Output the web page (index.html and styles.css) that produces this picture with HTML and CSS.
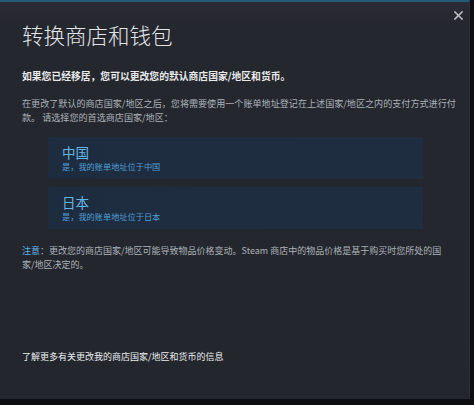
FILE: index.html
```html
<!DOCTYPE html>
<html lang="zh-CN">
<head>
<meta charset="utf-8">
<title>转换商店和钱包</title>
<link rel="stylesheet" href="styles.css">
</head>
<body>
<div class="modal">
  <button class="close" aria-label="关闭">
    <svg width="9" height="9" viewBox="0 0 9 9"><path d="M1 1L8 8M8 1L1 8" stroke="#b9bdc1" stroke-width="1.6" stroke-linecap="square"/></svg>
  </button>
  <h1 class="title">转换商店和钱包</h1>
  <p class="lead">如果您已经移居，您可以更改您的默认商店国家/地区和货币。</p>
  <p class="desc">在更改了默认的商店国家/地区之后，您将需要使用一个账单地址登记在上述国家/地区之内的支付方式进行付款。 请选择您的首选商店国家/地区：</p>
  <div class="options">
    <div class="option">
      <div class="option-name">中国</div>
      <div class="option-sub">是，我的账单地址位于中国</div>
    </div>
    <div class="option">
      <div class="option-name">日本</div>
      <div class="option-sub">是，我的账单地址位于日本</div>
    </div>
  </div>
  <p class="note"><span class="note-label">注意</span>：更改您的商店国家/地区可能导致物品价格变动。Steam 商店中的物品价格是基于购买时您所处的国家/地区决定的。</p>
  <a class="more" href="#">了解更多有关更改我的商店国家/地区和货币的信息</a>
</div>
</body>
</html>
```
FILE: styles.css
```css
html, body {
  margin: 0;
  padding: 0;
}

body {
  width: 474px;
  height: 405px;
  overflow: hidden;
  background: #0c0e11;
  font-family: "Noto Sans CJK SC", "Noto Sans", sans-serif;
}

.modal {
  position: relative;
  box-sizing: border-box;
  width: 470px;
  height: 399px;
  display: flex;
  flex-direction: column;
  padding: 19px 10px 35px 22px;
  border-top: 2px solid #245a78;
  border-right: 1px solid #2c3038;
  background: linear-gradient(180deg, #2a2b35 0px, #25272f 24px, #23262d 100%);
}

.close {
  position: absolute;
  top: 9px;
  right: 6px;
  width: 9px;
  height: 9px;
  padding: 0;
  border: 0;
  background: none;
  display: flex;
}

.title {
  margin: 0;
  font-size: 21.5px;
  line-height: 28px;
  font-weight: 300;
  color: #e3e6e9;
}

.lead {
  margin: 20px 0 0;
  font-size: 9.8px;
  line-height: 14px;
  font-weight: 700;
  color: #e8e9ea;
}

.desc {
  margin: 13px 0 0;
  font-size: 9.08px;
  line-height: 14px;
  color: #acb2b8;
  text-spacing-trim: space-all;
}

.options {
  margin: 13px 36px 0 26px;
  display: flex;
  flex-direction: column;
  gap: 8px;
}

.option {
  height: 42px;
  box-sizing: border-box;
  padding: 7px 14px;
  background: linear-gradient(90deg, #1d2c3e 0%, #1e2e40 100%);
}

.option-name {
  font-size: 13.5px;
  line-height: 16px;
  color: #66b5e8;
}

.option-sub {
  font-size: 8.2px;
  line-height: 13px;
  color: #519fd6;
}

.note {
  margin: 15px 10px 0 0;
  font-size: 9px;
  line-height: 14px;
  color: #acb2b8;
}

.note-label {
  color: #5fb2e6;
}

.more {
  margin-top: auto;
  font-size: 9px;
  line-height: 14px;
  color: #eceeef;
  text-decoration: none;
}
```
